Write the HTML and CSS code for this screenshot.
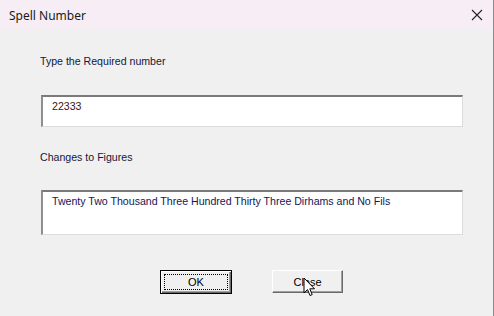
FILE: index.html
```html
<!DOCTYPE html>
<html>
<head>
<meta charset="utf-8">
<link rel="stylesheet" href="styles.css">
</head>
<body>
<div class="window">
  <div class="titlebar">
    <span class="title">Spell Number</span>
    <svg class="close-x" width="12" height="12" viewBox="0 0 12 12"><path d="M1 1 L11 11 M11 1 L1 11" stroke="#222" stroke-width="1.1" fill="none"/></svg>
  </div>
  <div class="content">
    <div class="label">Type the Required number</div>
    <div class="textbox tb1">22333</div>
    <div class="label label2">Changes to Figures</div>
    <div class="textbox tb2">Twenty Two Thousand Three Hundred Thirty Three Dirhams and No Fils</div>
    <div class="buttons">
      <div class="btn btn-default"><span class="focus">OK</span></div>
      <div class="btn">Close</div>
    </div>
  </div>
  <svg class="cursor" width="13" height="20" viewBox="0 0 13 20"><path d="M1 1 L1 16 L4.5 12.5 L7 18.5 L9.2 17.6 L6.8 11.8 L11.5 11.8 Z" fill="#fff" stroke="#000" stroke-width="1" stroke-linejoin="round"/></svg>
</div>
</body>
</html>
```

FILE: styles.css
```css
html, body {
  margin: 0;
  padding: 0;
  background: #f0f0f0;
}
.window {
  position: relative;
  width: 493px;
  height: 316px;
  background: #f0f0f0;
  border-right: 1px solid #8c8c8c;
  font-family: "Liberation Sans", Arial, sans-serif;
  overflow: hidden;
}
.titlebar {
  height: 30px;
  background: #f6eef4;
  display: flex;
  align-items: center;
  justify-content: space-between;
  padding: 0 10px 0 9px;
}
.title {
  font-family: "Noto Sans", "Open Sans", sans-serif;
  font-size: 12px;
  color: #1a1a1a;
}
.close-x {
  display: block;
}
.content {
  padding: 25px 30px 0 40px;
  display: flex;
  flex-direction: column;
}
.label {
  font-size: 10.6px;
  line-height: 13px;
  color: #16163a;
  height: 13px;
}
.label2 {
  margin-top: 24px;
}
.textbox {
  box-sizing: border-box;
  width: 422px;
  margin-left: 1px;
  background: #fff;
  border-top: 2px solid #7a7a7a;
  border-left: 2px solid #8e8e8e;
  border-right: 1px solid #dcdcdc;
  border-bottom: 1px solid #dcdcdc;
  font-size: 10.6px;
  line-height: 13px;
  padding: 3px 0 0 9px;
}
.tb1 {
  margin-top: 27px;
  height: 32px;
  color: #3a1414;
}
.tb2 {
  margin-top: 26px;
  height: 45px;
  color: #14145a;
}
.buttons {
  display: flex;
  gap: 40px;
  margin-top: 35px;
  padding-left: 120px;
}
.btn {
  box-sizing: border-box;
  width: 71px;
  height: 23px;
  background: #f0f0f0;
  border-top: 1px solid #fff;
  border-left: 1px solid #fff;
  border-right: 1px solid #6a6a6a;
  border-bottom: 1px solid #6a6a6a;
  box-shadow: inset -1px -1px 0 #a0a0a0;
  display: flex;
  align-items: center;
  justify-content: center;
  font-size: 11px;
  color: #000;
}
.btn-default {
  width: 72px;
  height: 24px;
  border: 1px solid #000;
  box-shadow: inset 1px 1px 0 #fff, inset -1px -1px 0 #6a6a6a, inset -2px -2px 0 #a0a0a0;
  padding: 3px;
}
.focus {
  flex: 1;
  align-self: stretch;
  border: 1px dotted #000;
  display: flex;
  align-items: center;
  justify-content: center;
}
.cursor {
  position: absolute;
  left: 303px;
  top: 277px;
}
```
